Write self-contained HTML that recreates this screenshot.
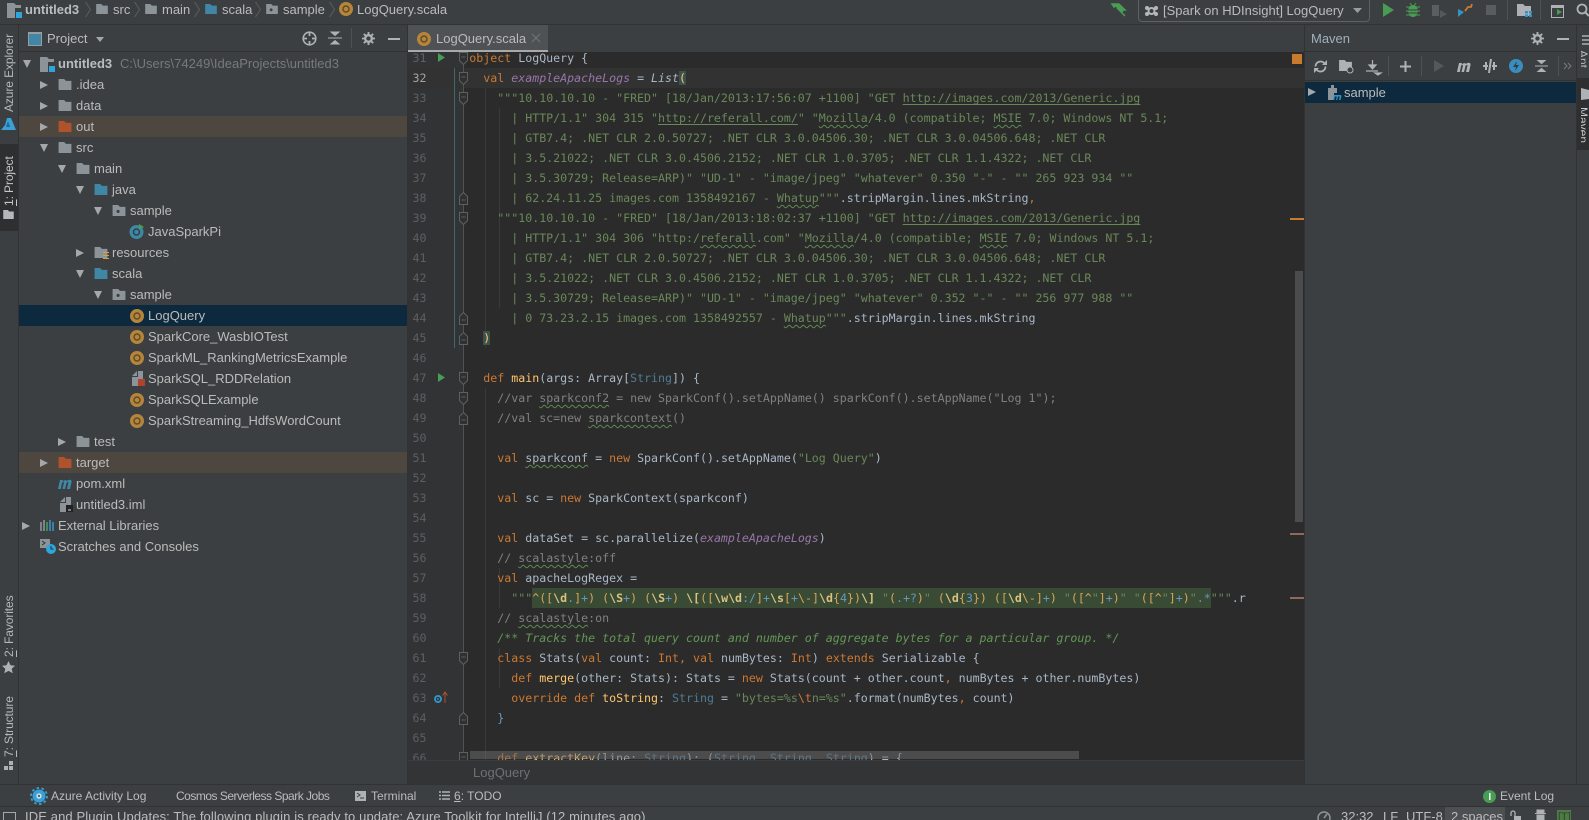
<!DOCTYPE html>
<html><head><meta charset="utf-8"><title>LogQuery.scala</title>
<style>
html,body{margin:0;padding:0;width:1589px;height:820px;overflow:hidden;background:#3c3f41}
#root{position:absolute;left:0;top:0;width:1589px;height:820px;overflow:hidden;font-family:"Liberation Sans",sans-serif;font-size:13px;color:#bbb;contain:paint}
.a{position:absolute}
.t{position:absolute;white-space:pre;line-height:20px;height:20px}
.b12{font-size:12px}
svg{position:absolute;overflow:visible}
.r{position:absolute;left:19px;width:388px;height:21px}
.r .t{top:0;line-height:21px;height:21px}
.v{position:absolute;writing-mode:vertical-rl;transform:rotate(180deg);white-space:pre;font-size:12px;letter-spacing:-.1px;line-height:18px;width:18px;text-align:left;color:#b4b8ba}
.v u{text-underline-offset:0}
.vr{position:absolute;writing-mode:vertical-rl;white-space:pre;font-size:12px;line-height:13px;color:#b4b8ba}
#ed{position:absolute;left:408px;top:52px;width:896px;height:708px;background:#2b2b2b;overflow:hidden}
#gut{position:absolute;left:0;top:0;width:55px;height:708px;background:#313335}
#code{position:absolute;left:61.3px;top:-4px;font:11.62px/20px "DejaVu Sans Mono",monospace;color:#a9b7c6}
#code div{height:20px;white-space:pre}
#nums{position:absolute;left:0;top:-4px;width:18.5px;text-align:right;font:11.62px/20px "DejaVu Sans Mono",monospace;color:#5d6063}
#nums div{height:20px}
.k{color:#cc7832}.s{color:#6a8759}.g{color:#808080}.c{color:#629755;font-style:italic}
.f{color:#ffc66d}.p{color:#9876aa;font-style:italic}.i{font-style:italic}
.ty{color:#507a96}.n{color:#6897bb}
.w{text-decoration:underline wavy #5d8a50 1px;text-underline-offset:2px}
.u{text-decoration:underline;text-underline-offset:2px}
.m{background:#3b514d;color:#ffc66d}
.y{color:#d8a657}.b{color:#6897bb}.d{color:#d9c27e;font-weight:bold}
.ig{position:absolute;width:1px;background:#3a3a3a}
.sf{position:absolute;height:2px;left:882px;width:14px}
</style></head><body><div id="root">
<svg width="0" height="0" style="position:absolute"><defs>
<symbol id="fo" viewBox="0 0 14 12"><path d="M0 0h6l2 2h6v10H0z" fill="currentColor"/></symbol>
<symbol id="pk" viewBox="0 0 14 12"><path d="M0 0h6l2 2h6v10H0z" fill="currentColor"/><circle cx="6" cy="7" r="1.7" fill="#3c3f41"/></symbol>
<symbol id="sc" viewBox="0 0 14 14"><circle cx="7" cy="7" r="7" fill="#b5853b"/><circle cx="7" cy="7" r="3" fill="none" stroke="#5f4a28" stroke-width="1.4"/></symbol>
<symbol id="mod" viewBox="0 0 15 15"><path d="M0 0h7l2 2h5v3H8v10H0z" fill="#8c9499"/><rect x="9" y="9" width="6" height="6" fill="#2ea6dc"/></symbol>
<symbol id="ar" viewBox="0 0 8 8"><path d="M0 0l8 4-8 4z" fill="#a4a8ab"/></symbol>
<symbol id="ad" viewBox="0 0 8 8"><path d="M0 0h8L4 8z" fill="#a4a8ab"/></symbol>
<symbol id="fs" viewBox="0 0 9 13"><path d="M.5.5h8v8L4.500 12.500.5 8.500zM2.500 5h4" fill="#2f3031" stroke="#5e6060"/></symbol>
<symbol id="fe" viewBox="0 0 9 13"><path d="M.5 12.500h8v-8L4.500.5.5 4.500zM2.500 8h4" fill="#2f3031" stroke="#5e6060"/></symbol>
<symbol id="gear" viewBox="0 0 14 14"><circle cx="7" cy="7" r="3.600" fill="none" stroke="#aeb2b5" stroke-width="2.500"/><path d="M7 0v3M7 11v3M0 7h3M11 7h3M2 2l2 2M10 10l2 2M12 2l-2 2M4 10l-2 2" stroke="#aeb2b5" stroke-width="2"/></symbol>
<symbol id="col" viewBox="0 0 14 14"><path d="M0 7h14M3 1l4 3.500L11 1zM3 13l4-3.500 4 3.500z" fill="#aeb2b5" stroke="#aeb2b5"/></symbol>
</defs></svg>

<!-- top bar -->
<div class="a" style="left:0;top:0;width:1589px;height:24px;background:#3c3f41;border-bottom:1px solid #323232"></div>
<svg style="left:7px;top:3px" width="15" height="15"><use href="#mod"/></svg>
<div class="t" style="left:25px;top:0;font-weight:bold;color:#b9bdbf">untitled3</div>
<svg style="left:85px;top:2px" width="6" height="15"><path d="M.5 0l5 7.500-5 7.500" fill="none" stroke="#5b5e60"/></svg>
<svg style="left:95px;top:4px;color:#8c9499" width="14" height="10"><use href="#fo"/></svg>
<div class="t" style="left:113px;top:0">src</div>
<svg style="left:134px;top:2px" width="6" height="15"><path d="M.5 0l5 7.500-5 7.500" fill="none" stroke="#5b5e60"/></svg>
<svg style="left:144px;top:4px;color:#8c9499" width="14" height="10"><use href="#fo"/></svg>
<div class="t" style="left:162px;top:0">main</div>
<svg style="left:194px;top:2px" width="6" height="15"><path d="M.5 0l5 7.500-5 7.500" fill="none" stroke="#5b5e60"/></svg>
<svg style="left:204px;top:4px;color:#3f87a5" width="14" height="10"><use href="#fo"/></svg>
<div class="t" style="left:222px;top:0">scala</div>
<svg style="left:255px;top:2px" width="6" height="15"><path d="M.5 0l5 7.500-5 7.500" fill="none" stroke="#5b5e60"/></svg>
<svg style="left:265px;top:4px;color:#8c9499" width="14" height="10"><use href="#pk"/></svg>
<div class="t" style="left:283px;top:0">sample</div>
<svg style="left:329px;top:2px" width="6" height="15"><path d="M.5 0l5 7.500-5 7.500" fill="none" stroke="#5b5e60"/></svg>
<svg style="left:339px;top:2px" width="14" height="14"><use href="#sc"/></svg>
<div class="t" style="left:357px;top:0">LogQuery.scala</div>

<svg style="left:1111px;top:3px" width="15" height="14"><path d="M1 1h7l6 6-2 0-1 2-6-6-2 1z M6 5l8 8" fill="#499c54" stroke="#499c54" stroke-width="1.500"/></svg>
<div class="a" style="left:1138px;top:-6px;width:230px;height:26px;border:1px solid #5e6163;border-radius:4px"></div>
<svg style="left:1145px;top:5px" width="13" height="12"><circle cx="6.500" cy="6" r="3" fill="none" stroke="#b4b8ba" stroke-width="2"/><circle cx="2" cy="3" r="2" fill="#b4b8ba"/><circle cx="11" cy="3" r="2" fill="#b4b8ba"/><circle cx="2" cy="9" r="2" fill="#b4b8ba"/><circle cx="11" cy="9" r="2" fill="#b4b8ba"/></svg>
<div class="t" style="left:1163px;top:1px">[Spark on HDInsight] LogQuery</div>
<svg style="left:1353px;top:8px" width="9" height="5"><path d="M0 0h9L4.500 5z" fill="#9a9da0"/></svg>
<svg style="left:1383px;top:3px" width="11" height="14"><path d="M0 0l11 7-11 7z" fill="#499c54"/></svg>
<svg style="left:1406px;top:3px" width="14" height="14"><ellipse cx="7" cy="8" rx="5" ry="6" fill="#499c54"/><path d="M0 4l14 0M0 8h14M0 12h14M4 0l2 3M10 0l-2 3" stroke="#499c54"/><path d="M2 7h10M2 10h10" stroke="#3c3f41"/></svg>
<svg style="left:1432px;top:4px" width="15" height="14"><path d="M0 1h7v11H0z" fill="#5b5e60"/><path d="M8 6l7 4-7 4z" fill="#55585a"/></svg>
<svg style="left:1458px;top:3px" width="14" height="14"><path d="M0 6l6 3-6 5z" fill="#3592c4"/><path d="M7 8l3-4h3l1-3" stroke="#cc7832" stroke-width="1.800" fill="none"/></svg>
<div class="a" style="left:1486px;top:5px;width:10px;height:10px;background:#5a5d5f"></div>
<div class="a" style="left:1507px;top:0;width:1px;height:20px;background:#4f5254"></div>
<svg style="left:1517px;top:4px;color:#aeb2b5" width="14" height="12"><use href="#fo"/></svg>
<svg style="left:1525px;top:11px" width="7" height="6"><path d="M0 0h3v2.500H0zM4 0h3v2.500H4zM0 3.500h3V6H0zM4 3.500h3V6H4z" fill="#3592c4"/></svg>
<div class="a" style="left:1540px;top:0;width:1px;height:20px;background:#4f5254"></div>
<div class="a" style="left:1551px;top:5px;width:11px;height:9px;border:1.500px solid #aeb2b5;border-top-width:3px"></div>
<svg style="left:1557px;top:9px" width="5" height="6"><path d="M0 0l5 3-5 3z" fill="#499c54"/></svg>
<svg style="left:1576px;top:3px" width="13" height="14"><circle cx="6" cy="6" r="4.500" fill="none" stroke="#aeb2b5" stroke-width="1.800"/><path d="M9 9l4 4" stroke="#aeb2b5" stroke-width="2"/></svg>

<!-- left strip -->
<div class="a" style="left:0;top:25px;width:18px;height:759px;background:#3c3f41;border-right:1px solid #323232"></div>
<div class="v" style="left:0;top:36px;height:76px">Azure Explorer</div>
<svg style="left:1px;top:118px" width="15" height="12"><path d="M6 0h4l5 12H0l4-5z" fill="#3aa0d5"/><path d="M7 3l2 6H5z" fill="#1d6a94"/></svg>
<div class="a" style="left:0;top:144px;width:18px;height:87px;background:#2d2f30"></div>
<div class="v" style="left:0;top:154px;height:52px;color:#c4c8ca"><u>1</u>: Project</div>
<svg style="left:3px;top:210px;color:#b4b8ba" width="11" height="9"><use href="#fo"/></svg>
<div class="v" style="left:0;top:597px;height:60px"><u>2</u>: Favorites</div>
<svg style="left:2px;top:661px" width="13" height="12"><path d="M6.500 0l2 4.300 4.500.5-3.300 3 1 4.500-4.200-2.400-4.200 2.400 1-4.500L0 4.800l4.500-.5z" fill="#aeb2b5"/></svg>
<div class="v" style="left:0;top:695px;height:62px"><u>7</u>: Structure</div>
<svg style="left:4px;top:761px" width="10" height="10"><path d="M5 0h4v4H5zM0 5h4v4H0zM5 5h4v4H5z" fill="#aeb2b5"/></svg>

<!-- project panel -->
<div class="a" style="left:19px;top:25px;width:388px;height:759px;background:#3c3f41"></div>
<div class="a" style="left:19px;top:51px;width:388px;height:1px;background:#323232"></div>
<div class="a" style="left:407px;top:25px;width:1px;height:759px;background:#323232"></div>
<div class="a" style="left:28px;top:32px;width:12px;height:11px;background:#3f87a5;border:1px solid #9a9da0;border-top-width:2px"></div>
<div class="t" style="left:47px;top:29px">Project</div>
<svg style="left:96px;top:37px" width="8" height="5"><path d="M0 0h8L4 5z" fill="#a4a8ab"/></svg>
<svg style="left:302px;top:31px" width="15" height="15"><circle cx="7.500" cy="7.500" r="6.300" fill="none" stroke="#aeb2b5" stroke-width="1.600"/><path d="M7.500 1v4M7.500 10v4M1 7.500h4M10 7.500h4" stroke="#aeb2b5" stroke-width="1.800"/></svg>
<svg style="left:328px;top:31px" width="14" height="14"><use href="#col"/></svg>
<div class="a" style="left:351px;top:28px;width:1px;height:20px;background:#4f5254"></div>
<svg style="left:362px;top:32px" width="13" height="13"><use href="#gear"/></svg>
<div class="a" style="left:388px;top:38px;width:12px;height:2px;background:#aeb2b5"></div>

<!-- tree -->
<div class="r" style="top:53px"><svg style="left:4px;top:7px" width="8" height="8"><use href="#ad"/></svg><svg style="left:21px;top:4px" width="15" height="15"><use href="#mod"/></svg><div class="t" style="left:39px;font-weight:bold;color:#b9bdbf">untitled3</div><div class="t" style="left:101px;color:#777a7c">C:\Users\74249\IdeaProjects\untitled3</div></div>
<div class="r" style="top:74px"><svg style="left:21px;top:7px" width="8" height="8"><use href="#ar"/></svg><svg style="left:39px;top:5px;color:#8c9499" width="14" height="11"><use href="#fo"/></svg><div class="t" style="left:57px">.idea</div></div>
<div class="r" style="top:95px"><svg style="left:21px;top:7px" width="8" height="8"><use href="#ar"/></svg><svg style="left:39px;top:5px;color:#8c9499" width="14" height="11"><use href="#fo"/></svg><div class="t" style="left:57px">data</div></div>
<div class="r" style="top:116px;background:#4d4740"><svg style="left:21px;top:7px" width="8" height="8"><use href="#ar"/></svg><svg style="left:39px;top:5px;color:#b0532d" width="14" height="11"><use href="#fo"/></svg><div class="t" style="left:57px">out</div></div>
<div class="r" style="top:137px"><svg style="left:21px;top:7px" width="8" height="8"><use href="#ad"/></svg><svg style="left:39px;top:5px;color:#8c9499" width="14" height="11"><use href="#fo"/></svg><div class="t" style="left:57px">src</div></div>
<div class="r" style="top:158px"><svg style="left:39px;top:7px" width="8" height="8"><use href="#ad"/></svg><svg style="left:57px;top:5px;color:#8c9499" width="14" height="11"><use href="#fo"/></svg><div class="t" style="left:75px">main</div></div>
<div class="r" style="top:179px"><svg style="left:57px;top:7px" width="8" height="8"><use href="#ad"/></svg><svg style="left:75px;top:5px;color:#3f87a5" width="14" height="11"><use href="#fo"/></svg><div class="t" style="left:93px">java</div></div>
<div class="r" style="top:200px"><svg style="left:75px;top:7px" width="8" height="8"><use href="#ad"/></svg><svg style="left:93px;top:5px;color:#8c9499" width="14" height="11"><use href="#pk"/></svg><div class="t" style="left:111px">sample</div></div>
<div class="r" style="top:221px"><svg style="left:110px;top:3px" width="15" height="15"><circle cx="7.500" cy="8" r="7" fill="#3f87a5"/><circle cx="7.500" cy="8" r="3" fill="none" stroke="#2b3f4c" stroke-width="1.500"/><path d="M10 0l5 3-5 3z" fill="#499c54"/></svg><div class="t" style="left:129px">JavaSparkPi</div></div>
<div class="r" style="top:242px"><svg style="left:57px;top:7px" width="8" height="8"><use href="#ar"/></svg><svg style="left:75px;top:5px;color:#8c9499" width="14" height="11"><use href="#fo"/></svg><svg style="left:84px;top:10px" width="6" height="7"><path d="M0 .5h6M0 3.500h6M0 6.500h6" stroke="#d9a343"/></svg><div class="t" style="left:93px">resources</div></div>
<div class="r" style="top:263px"><svg style="left:57px;top:7px" width="8" height="8"><use href="#ad"/></svg><svg style="left:75px;top:5px;color:#3f87a5" width="14" height="11"><use href="#fo"/></svg><div class="t" style="left:93px">scala</div></div>
<div class="r" style="top:284px"><svg style="left:75px;top:7px" width="8" height="8"><use href="#ad"/></svg><svg style="left:93px;top:5px;color:#8c9499" width="14" height="11"><use href="#pk"/></svg><div class="t" style="left:111px">sample</div></div>
<div class="r" style="top:305px;background:#0d293e"><svg style="left:111px;top:4px" width="14" height="14"><use href="#sc"/></svg><div class="t" style="left:129px">LogQuery</div></div>
<div class="r" style="top:326px"><svg style="left:111px;top:4px" width="14" height="14"><use href="#sc"/></svg><div class="t" style="left:129px">SparkCore_WasbIOTest</div></div>
<div class="r" style="top:347px"><svg style="left:111px;top:4px" width="14" height="14"><use href="#sc"/></svg><div class="t" style="left:129px">SparkML_RankingMetricsExample</div></div>
<div class="r" style="top:368px"><svg style="left:113px;top:3px" width="13" height="15"><path d="M5 0v5H0zM6 0h5v15H0V6h6z" fill="#8c9499"/><rect x="6" y="8" width="7" height="7" fill="#b0432d"/></svg><div class="t" style="left:129px">SparkSQL_RDDRelation</div></div>
<div class="r" style="top:389px"><svg style="left:111px;top:4px" width="14" height="14"><use href="#sc"/></svg><div class="t" style="left:129px">SparkSQLExample</div></div>
<div class="r" style="top:410px"><svg style="left:111px;top:4px" width="14" height="14"><use href="#sc"/></svg><div class="t" style="left:129px">SparkStreaming_HdfsWordCount</div></div>
<div class="r" style="top:431px"><svg style="left:39px;top:7px" width="8" height="8"><use href="#ar"/></svg><svg style="left:57px;top:5px;color:#8c9499" width="14" height="11"><use href="#fo"/></svg><div class="t" style="left:75px">test</div></div>
<div class="r" style="top:452px;background:#4d4740"><svg style="left:21px;top:7px" width="8" height="8"><use href="#ar"/></svg><svg style="left:39px;top:5px;color:#b0532d" width="14" height="11"><use href="#fo"/></svg><div class="t" style="left:57px">target</div></div>
<div class="r" style="top:473px"><svg style="left:38px;top:5px" width="15" height="11"><path d="M1 11L3 2h3l-.5 2C7 2 9 1.500 10 3c1-1.500 5-2 4.500 1l-1.500 7h-3l1.500-6.500c0-1-1.500-.5-2 .5L8 11H5.500l1.500-6.500c0-1-1.500-.5-2 .5L3.800 11z" fill="#3f87a5"/></svg><div class="t" style="left:57px">pom.xml</div></div>
<div class="r" style="top:494px"><svg style="left:41px;top:3px" width="13" height="15"><path d="M5 0v5H0zM6 0h5v15H0V6h6z" fill="#8c9499"/><rect x="6" y="8" width="7" height="7" fill="#222"/><path d="M8 13h3" stroke="#ddd"/></svg><div class="t" style="left:57px">untitled3.iml</div></div>
<div class="r" style="top:515px"><svg style="left:3px;top:7px" width="8" height="8"><use href="#ar"/></svg><svg style="left:21px;top:4px" width="14" height="13"><path d="M1 3v9M4 1v11" stroke="#8c9499" stroke-width="1.600"/><path d="M7 3v9" stroke="#499c54" stroke-width="1.600"/><path d="M10 1v11M13 3v9" stroke="#3592c4" stroke-width="1.600"/></svg><div class="t" style="left:39px">External Libraries</div></div>
<div class="r" style="top:536px"><svg style="left:21px;top:3px" width="16" height="15"><path d="M0 0h10v9H0z" fill="#8c9499"/><path d="M2 2l3 2-3 2" stroke="#333" fill="none"/><circle cx="11" cy="10" r="5" fill="#2ea6dc"/><path d="M11 7v3h2.500" stroke="#1c2c36" fill="none"/></svg><div class="t" style="left:39px">Scratches and Consoles</div></div>

<!-- tab bar -->
<div class="a" style="left:408px;top:25px;width:896px;height:27px;background:#3c3f41"></div>
<div class="a" style="left:408px;top:25px;width:140px;height:25px;background:#4e5254;border-bottom:2px solid #a7a9ab"></div>
<svg style="left:417px;top:32px" width="14" height="14"><use href="#sc"/></svg>
<div class="t" style="left:436px;top:29px;color:#bbb">LogQuery.scala</div>
<svg style="left:532px;top:34px" width="8" height="8"><path d="M0 0l8 8M8 0L0 8" stroke="#6f7375" stroke-width="1.200"/></svg>

<!-- editor -->
<div id="ed">
<div id="gut"></div>
<div class="a" style="left:55px;top:16px;width:841px;height:20px;background:#323232"></div>
<div class="a" style="left:0;top:16px;width:55px;height:20px;background:#323232"></div>
<div class="ig" style="left:77px;top:36px;height:260px"></div>
<div class="ig" style="left:91px;top:56px;height:200px"></div>
<div class="ig" style="left:77px;top:336px;height:372px"></div>
<div class="ig" style="left:91px;top:516px;height:40px"></div>
<div class="ig" style="left:91px;top:596px;height:40px"></div>
<div class="a" style="left:124px;top:536px;width:679px;height:20px;background:#394a35"></div>
<div id="nums"><div>31</div><div style="color:#a4a3a3">32</div><div>33</div><div>34</div><div>35</div><div>36</div><div>37</div><div>38</div><div>39</div><div>40</div><div>41</div><div>42</div><div>43</div><div>44</div><div>45</div><div>46</div><div>47</div><div>48</div><div>49</div><div>50</div><div>51</div><div>52</div><div>53</div><div>54</div><div>55</div><div>56</div><div>57</div><div>58</div><div>59</div><div>60</div><div>61</div><div>62</div><div>63</div><div>64</div><div>65</div><div>66</div></div>
<div class="a" style="left:46px;top:16px;width:1px;height:280px;background:#3e6a6a"></div>
<div class="a" style="left:55px;top:0;width:1px;height:708px;background:#505254"></div>
<svg style="left:30px;top:1px" width="7" height="9"><path d="M0 0l7 4.500-7 4.500z" fill="#499c54"/></svg>
<svg style="left:30px;top:321px" width="7" height="9"><path d="M0 0l7 4.500-7 4.500z" fill="#499c54"/></svg>
<svg style="left:26px;top:639px" width="14" height="13"><circle cx="4" cy="8" r="3" fill="#2b2b2b" stroke="#3592c4" stroke-width="2"/><circle cx="4" cy="8" r="1" fill="#3592c4"/><path d="M11 12V2M8.500 4.500L11 1l2.500 3.500" stroke="#b0532d" fill="none"/></svg>
<svg style="left:51px;top:0" width="9" height="13"><use href="#fs"/></svg>
<svg style="left:51px;top:20px" width="9" height="13"><use href="#fs"/></svg>
<svg style="left:51px;top:40px" width="9" height="13"><use href="#fs"/></svg>
<svg style="left:51px;top:140px" width="9" height="13"><use href="#fe"/></svg>
<svg style="left:51px;top:160px" width="9" height="13"><use href="#fs"/></svg>
<svg style="left:51px;top:260px" width="9" height="13"><use href="#fe"/></svg>
<svg style="left:51px;top:280px" width="9" height="13"><use href="#fe"/></svg>
<svg style="left:51px;top:320px" width="9" height="13"><use href="#fs"/></svg>
<svg style="left:51px;top:340px" width="9" height="13"><use href="#fs"/></svg>
<svg style="left:51px;top:360px" width="9" height="13"><use href="#fe"/></svg>
<svg style="left:51px;top:600px" width="9" height="13"><use href="#fs"/></svg>
<svg style="left:51px;top:660px" width="9" height="13"><use href="#fe"/></svg>
<svg style="left:51px;top:700px" width="9" height="13"><use href="#fs"/></svg>
<div id="code"><div><span class="k">object</span> LogQuery {</div>
<div>  <span class="k">val</span> <span class="p">exampleApacheLogs</span> = <span class="i">List</span><span class="m">(</span></div>
<div>    <span class="s">"""10.10.10.10 - "FRED" [18/Jan/2013:17:56:07 +1100] "GET <span class="u">http://images.com/2013/Generic.jpg</span></span></div>
<div class="s">      | HTTP/1.1" 304 315 "<span class="u">http://referall.com/</span>" "<span class="w">Mozilla</span>/4.0 (compatible; <span class="w">MSIE</span> 7.0; Windows NT 5.1;</div>
<div class="s">      | GTB7.4; .NET CLR 2.0.50727; .NET CLR 3.0.04506.30; .NET CLR 3.0.04506.648; .NET CLR</div>
<div class="s">      | 3.5.21022; .NET CLR 3.0.4506.2152; .NET CLR 1.0.3705; .NET CLR 1.1.4322; .NET CLR</div>
<div class="s">      | 3.5.30729; Release=ARP)" "UD-1" - "image/jpeg" "whatever" 0.350 "-" - "" 265 923 934 ""</div>
<div><span class="s">      | 62.24.11.25 images.com 1358492167 - <span class="w">Whatup</span>"""</span>.stripMargin.lines.mkString<span class="k">,</span></div>
<div>    <span class="s">"""10.10.10.10 - "FRED" [18/Jan/2013:18:02:37 +1100] "GET <span class="u">http://images.com/2013/Generic.jpg</span></span></div>
<div class="s">      | HTTP/1.1" 304 306 "http:/<span class="w">referall</span>.com" "<span class="w">Mozilla</span>/4.0 (compatible; <span class="w">MSIE</span> 7.0; Windows NT 5.1;</div>
<div class="s">      | GTB7.4; .NET CLR 2.0.50727; .NET CLR 3.0.04506.30; .NET CLR 3.0.04506.648; .NET CLR</div>
<div class="s">      | 3.5.21022; .NET CLR 3.0.4506.2152; .NET CLR 1.0.3705; .NET CLR 1.1.4322; .NET CLR</div>
<div class="s">      | 3.5.30729; Release=ARP)" "UD-1" - "image/jpeg" "whatever" 0.352 "-" - "" 256 977 988 ""</div>
<div><span class="s">      | 0 73.23.2.15 images.com 1358492557 - <span class="w">Whatup</span>"""</span>.stripMargin.lines.mkString</div>
<div>  <span class="m">)</span></div>
<div> </div>
<div>  <span class="k">def</span> <span class="f">main</span>(args: Array[<span class="ty">String</span>]) {</div>
<div class="g">    //var <span class="w">sparkconf2</span> = new SparkConf().setAppName() sparkConf().setAppName("Log 1");</div>
<div class="g">    //val sc=new <span class="w">sparkcontext</span>()</div>
<div> </div>
<div>    <span class="k">val</span> <span class="w">sparkconf</span> = <span class="k">new</span> SparkConf().setAppName(<span class="s">"Log Query"</span>)</div>
<div> </div>
<div>    <span class="k">val</span> sc = <span class="k">new</span> SparkContext(sparkconf)</div>
<div> </div>
<div>    <span class="k">val</span> dataSet = sc.parallelize(<span class="p">exampleApacheLogs</span>)</div>
<div class="g">    // <span class="w">scalastyle</span>:off</div>
<div>    <span class="k">val</span> apacheLogRegex =</div>
<div>      <span class="s">"""</span><span class="y">^([</span><span class="d">\d</span><span class="b">.</span><span class="y">]</span><span class="b">+</span><span class="y">)</span> <span class="y">(</span><span class="d">\S</span><span class="b">+</span><span class="y">)</span> <span class="y">(</span><span class="d">\S</span><span class="b">+</span><span class="y">)</span> <span class="d">\[</span><span class="y">([</span><span class="d">\w\d</span><span class="b">:/</span><span class="y">]</span><span class="b">+</span><span class="d">\s</span><span class="y">[</span><span class="b">+</span><span class="y">\-]</span><span class="d">\d</span><span class="y">{</span><span class="b">4</span><span class="y">})</span><span class="d">\]</span> <span class="s">"</span><span class="y">(</span><span class="b">.+?</span><span class="y">)</span><span class="s">"</span> <span class="y">(</span><span class="d">\d</span><span class="y">{</span><span class="b">3</span><span class="y">})</span> <span class="y">([</span><span class="d">\d</span><span class="y">\-]</span><span class="b">+</span><span class="y">)</span> <span class="s">"</span><span class="y">([^</span><span class="s">"</span><span class="y">]</span><span class="b">+</span><span class="y">)</span><span class="s">"</span> <span class="s">"</span><span class="y">([^</span><span class="s">"</span><span class="y">]</span><span class="b">+</span><span class="y">)</span><span class="s">"</span><span class="b">.*</span><span class="s">"""</span>.r</div>
<div class="g">    // <span class="w">scalastyle</span>:on</div>
<div class="c">    /** Tracks the total query count and number of aggregate bytes for a particular group. */</div>
<div>    <span class="k">class</span> Stats(<span class="k">val</span> count: <span class="k">Int,</span> <span class="k">val</span> numBytes: <span class="k">Int</span>) <span class="k">extends</span> Serializable {</div>
<div>      <span class="k">def</span> <span class="f">merge</span>(other: Stats): Stats = <span class="k">new</span> Stats(count + other.count<span class="k">,</span> numBytes + other.numBytes)</div>
<div>      <span class="k">override def</span> <span class="f">toString</span>: <span class="ty">String</span> = <span class="s">"bytes=%s<span class="k">\t</span>n=%s"</span>.format(numBytes<span class="k">,</span> count)</div>
<div>    <span style="color:#6897bb">}</span></div>
<div> </div>
<div>    <span class="k">def</span> <span class="f">extractKey</span>(line: <span class="ty">String</span>): (<span class="ty">String</span><span class="k">,</span> <span class="ty">String</span><span class="k">,</span> <span class="ty">String</span>) = {</div></div>
<div class="a" style="left:884px;top:2px;width:10px;height:10px;background:#c77b2e"></div>
<div class="sf" style="top:166px;background:#c77b2e"></div>
<div class="sf" style="top:481px;background:#8f6a5a"></div>
<div class="sf" style="top:545px;background:#8f6a5a"></div>
<div class="a" style="left:887px;top:219px;width:8px;height:251px;background:#4b4c4d"></div>
<div class="a" style="left:62px;top:699px;width:609px;height:8px;background:rgba(110,110,110,.5)"></div>
</div>

<!-- editor breadcrumb -->
<div class="a" style="left:408px;top:760px;width:896px;height:24px;background:#323436;border-top:1px solid #3a3c3e;box-sizing:border-box"></div>
<div class="t" style="left:473px;top:763px;color:#6f7274">LogQuery</div>

<!-- maven -->
<div class="a" style="left:1304px;top:25px;width:1px;height:759px;background:#323232"></div>
<div class="a" style="left:1305px;top:51px;width:271px;height:1px;background:#323232"></div>
<div class="a" style="left:1305px;top:80px;width:271px;height:1px;background:#323232"></div>
<div class="t" style="left:1311px;top:29px;color:#a0b0bc">Maven</div>
<svg style="left:1531px;top:32px" width="13" height="13"><use href="#gear"/></svg>
<div class="a" style="left:1557px;top:38px;width:12px;height:2px;background:#aeb2b5"></div>
<svg style="left:1314px;top:60px" width="13" height="13"><path d="M1.500 6.500a5 5 0 0 1 9-3M11.500 6.500a5 5 0 0 1-9 3" fill="none" stroke="#aeb2b5" stroke-width="1.800"/><path d="M13 0v5H8zM0 13V8h5z" fill="#aeb2b5"/></svg>
<svg style="left:1339px;top:60px;color:#aeb2b5" width="13" height="11"><use href="#fo"/></svg>
<svg style="left:1346px;top:66px" width="8" height="8"><circle cx="4" cy="4" r="3" fill="#3c3f41" stroke="#aeb2b5"/></svg>
<svg style="left:1366px;top:60px" width="15" height="15"><path d="M6.500 0v7M3 5l3.500 4L10 5zM0 11h12M9 13h6l-3 2z" stroke="#aeb2b5" fill="#aeb2b5" stroke-width="1.200"/></svg>
<div class="a" style="left:1388px;top:56px;width:1px;height:20px;background:#4f5254"></div>
<svg style="left:1400px;top:61px" width="11" height="11"><path d="M5.500 0v11M0 5.500h11" stroke="#aeb2b5" stroke-width="2"/></svg>
<div class="a" style="left:1421px;top:56px;width:1px;height:20px;background:#4f5254"></div>
<svg style="left:1434px;top:60px" width="10" height="12"><path d="M0 0l10 6-10 6z" fill="#55585a"/></svg>
<svg style="left:1456px;top:61px" width="16" height="11"><path d="M1 11L3 2h3l-.5 2C7 2 9 1.500 10 3c1-1.500 5-2 4.500 1l-1.500 7h-3l1.500-6.500c0-1-1.500-.5-2 .5L8 11H5.500l1.500-6.500c0-1-1.500-.5-2 .5L3.800 11z" fill="#aeb2b5"/></svg>
<svg style="left:1483px;top:59px" width="14" height="14"><path d="M3 3v8M11 3v8M0 7h5M9 7h5M8 0L6 14" stroke="#aeb2b5" stroke-width="2"/></svg>
<svg style="left:1509px;top:59px" width="14" height="14"><circle cx="7" cy="7" r="7" fill="#3a8dbd"/><path d="M8 2L4 8h3l-1 4 4-6H7z" fill="#2b3f4c"/></svg>
<svg style="left:1535px;top:59px" width="13" height="14"><use href="#col"/></svg>
<div class="a" style="left:1558px;top:56px;width:1px;height:20px;background:#4f5254"></div>
<svg style="left:1564px;top:63px" width="7" height="6"><path d="M0 0l3 3-3 3M4 0l3 3-3 3" fill="none" stroke="#777a7c"/></svg>
<div class="a" style="left:1305px;top:82px;width:271px;height:21px;background:#0d293e"></div>
<svg style="left:1308px;top:88px" width="8" height="8"><use href="#ar"/></svg>
<svg style="left:1328px;top:85px" width="14" height="15"><path d="M0 3h3V0h3v3h3V0h0v8H6v7H0z" fill="#8c9499"/><path d="M5 15l1-5h6.500l1 .8-1 4.200h-1.500l.8-3.500H10l-.8 3.500H8l.8-3.500H7l-.8 3.500z" fill="#3592c4"/></svg>
<div class="t" style="left:1344px;top:83px">sample</div>

<!-- right strip -->
<div class="a" style="left:1576px;top:25px;width:13px;height:759px;background:#3c3f41;border-left:1px solid #323232;box-sizing:border-box"></div>
<svg style="left:1582px;top:34px" width="7" height="12"><path d="M0 2h7M0 6h7M0 10h7" stroke="#8f9396" stroke-width="2"/></svg>
<div class="vr" style="left:1581px;top:50px;overflow:hidden;width:8px">Ant</div>
<div class="a" style="left:1577px;top:78px;width:12px;height:72px;background:#2d2f30"></div>
<svg style="left:1581px;top:88px" width="8" height="12"><path d="M0 0l8 2v9L0 12z" fill="#aeb2b5"/></svg>
<div class="vr" style="left:1581px;top:107px;overflow:hidden;width:8px;color:#c4c8ca">Maven</div>

<!-- bottom tool bar -->
<div class="a" style="left:0;top:784px;width:1589px;height:23px;background:#3c3f41;border-top:1px solid #323232;box-sizing:border-box"></div>
<svg style="left:31px;top:788px" width="16" height="16"><circle cx="8" cy="8" r="6.500" fill="#3aa0d5"/><circle cx="8" cy="8" r="8" fill="none" stroke="#3aa0d5" stroke-width="1.800" stroke-dasharray="2.500 2.500"/><circle cx="8" cy="8" r="2.600" fill="#d5e8f2"/><circle cx="8" cy="8" r="1.200" fill="#3c6b85"/></svg>
<div class="t b12" style="left:51px;top:786px">Azure Activity Log</div>
<div class="t b12" style="left:176px;top:786px;letter-spacing:-.5px">Cosmos Serverless Spark Jobs</div>
<div class="a" style="left:355px;top:791px;width:11px;height:10px;background:#aeb2b5"></div>
<svg style="left:356px;top:792px" width="9" height="8"><path d="M1 1l3 2-3 2M4 6h4" stroke="#3c3f41" fill="none"/></svg>
<div class="t b12" style="left:371px;top:786px">Terminal</div>
<svg style="left:439px;top:791px" width="11" height="10"><path d="M0 1h2M3 1h8M0 4.500h2M3 4.500h8M0 8h2M3 8h8" stroke="#aeb2b5" stroke-width="1.500"/></svg>
<div class="t b12" style="left:454px;top:786px"><u>6</u>: TODO</div>
<svg style="left:1483px;top:790px" width="13" height="13"><circle cx="6.500" cy="6.500" r="6.500" fill="#499c54"/><path d="M6.800 3v7" stroke="#e8f0e8" stroke-width="1.600"/></svg>
<div class="t b12" style="left:1500px;top:786px">Event Log</div>

<!-- status bar -->
<div class="a" style="left:0;top:806px;width:1589px;height:14px;background:#3c3f41;border-top:1px solid #323232;box-sizing:border-box;overflow:hidden"></div>
<div class="a" style="left:3px;top:812px;width:11px;height:11px;border:1px solid #a4a8ab"></div>
<div class="t" style="left:25px;top:807px;letter-spacing:.11px">IDE and Plugin Updates: The following plugin is ready to update: Azure Toolkit for IntelliJ (12 minutes ago)</div>
<svg style="left:1317px;top:811px" width="14" height="14"><circle cx="7" cy="7" r="6" fill="none" stroke="#8f9396" stroke-width="1.500"/><path d="M7 7l3-4" stroke="#8f9396" stroke-width="1.500"/></svg>
<div class="t" style="left:1341px;top:807px">32:32</div>
<div class="t" style="left:1383px;top:807px">LF</div>
<div class="t" style="left:1406px;top:807px">UTF-8</div>
<div class="a" style="left:1445px;top:807px;width:60px;height:13px;background:#4c5052"></div>
<div class="t" style="left:1451px;top:807px">2 spaces</div>
<svg style="left:1510px;top:811px" width="12" height="10"><path d="M1 5V2a2 2 0 0 1 4 0v3" fill="none" stroke="#aeb2b5" stroke-width="1.300"/><rect x="4" y="5" width="7" height="6" fill="#aeb2b5"/></svg>
<svg style="left:1535px;top:810px" width="11" height="10"><path d="M2 3h7v-3H2zM0 3.500h11M2 5h7v5H2z" fill="#aeb2b5" stroke="#aeb2b5"/></svg>
<div class="a" style="left:1557px;top:810px;width:14px;height:10px;background:#4f7a45"></div>
<div class="t" style="left:1558px;top:807px;color:#2d4a2a;font-size:11px">[T]</div>
</div></body></html>
